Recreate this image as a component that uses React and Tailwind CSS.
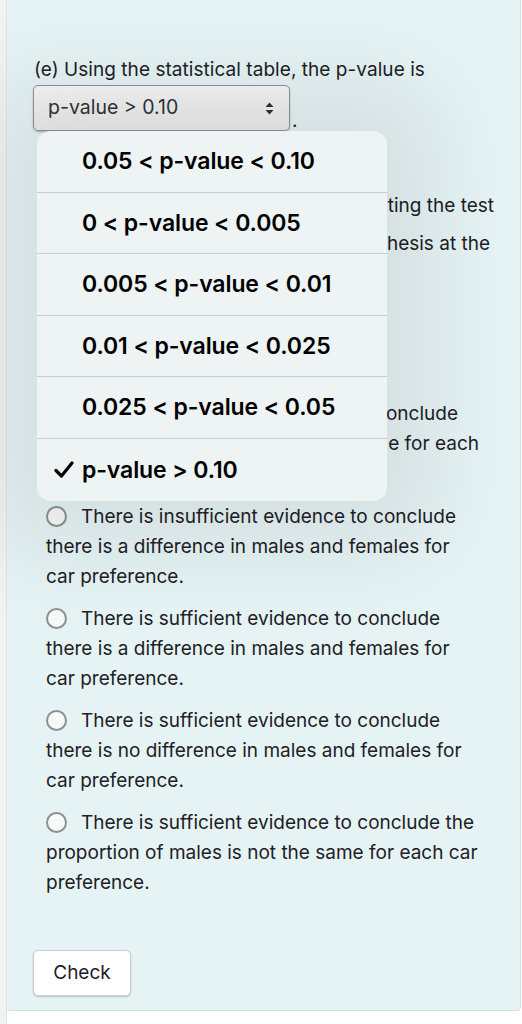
import { useState } from "react"

const choices = [
    "0.05 < p-value < 0.10",
    "0 < p-value < 0.005",
    "0.005 < p-value < 0.01",
    "0.01 < p-value < 0.025",
    "0.025 < p-value < 0.05",
    "p-value > 0.10",
]

const answers = [
    ["There is insufficient evidence to conclude", "there is a difference in males and females for", "car preference."],
    ["There is sufficient evidence to conclude", "there is a difference in males and females for", "car preference."],
    ["There is sufficient evidence to conclude", "there is no difference in males and females for", "car preference."],
    ["There is sufficient evidence to conclude the", "proportion of males is not the same for each car", "preference."],
]

function Radio() {
    return (
        <span className="inline-block w-[21px] h-[21px] rounded-full border-2 border-[#8d8f91] bg-[#f7f8f8] align-[-4px] mr-[14px]" />
    )
}

export default function App() {
    const [selected] = useState(5)

    return (
        <div className="min-h-[1024px] bg-white flex font-['Inter',sans-serif] text-[19px] text-[#1d2125]">
            <div className="w-[7px] bg-[#f1f2f2] border-r border-[#dfe3e4]" />
            <div className="relative w-[514px] h-[1011px] bg-[#e6f3f5] border-b border-r border-[#cfdfe2] rounded-b-[4px] pt-[55px] pl-[27px] pr-[21px]">
                {/* (e) */}
                <div className="h-[30px] leading-[30px] tracking-[0.05px]">(e) Using the statistical table, the p-value is</div>
                <div className="flex items-end">
                    <div className="w-[257px] h-[46px] -ml-[1px] rounded-[5px] border border-[#8e9398] bg-gradient-to-b from-[#f6f6f6] to-[#ebebeb] shadow-[0_1px_2px_rgba(0,0,0,0.25)] flex items-center justify-between pl-[14px] pr-[15px] text-[19.5px] text-[#2f3337]">
                        <span>{choices[selected]}</span>
                        <svg width="9" height="13" viewBox="0 0 9 13">
                            <path d="M4.5 0.5 L8.5 5 H0.5 Z" fill="#2f3337" />
                            <path d="M4.5 12.5 L8.5 8 H0.5 Z" fill="#2f3337" />
                        </svg>
                    </div>
                    <span className="ml-[2px] leading-[20px]">.</span>
                </div>

                {/* (f) – mostly covered by the picker, only the line ends show */}
                <div className="mt-[56px] leading-[38px]">
                    <div className="flex justify-end"><span className="mr-[5px]">ting the test</span></div>
                    <div className="flex justify-end"><span className="mr-[9px]">hesis at the</span></div>
                    <div className="h-[38px]" />
                </div>

                {/* (g) */}
                <div className="mt-[53px] h-[30px]" />
                <div className="mt-[15px] leading-[30px]">
                    <div className="flex justify-end"><span className="mr-[41px]">onclude</span></div>
                    <div className="flex justify-end"><span className="mr-[20px]">e for each</span></div>
                </div>

                {/* options */}
                <div className="mt-[43px] ml-[12px] flex flex-col gap-[12px] leading-[30px]">
                    {answers.map((a, i) => (
                        <div key={i}>
                            <div><Radio />{a[0]}</div>
                            <div>{a[1]}</div>
                            <div>{a[2]}</div>
                        </div>
                    ))}
                </div>

                <button className="mt-[52px] -ml-[1px] w-[98px] h-[46px] bg-white rounded-[5px] border border-[#c9cccf] shadow-[0_1px_2px_rgba(0,0,0,0.2)] text-[19px] text-[#1d2125]">
                    Check
                </button>

                {/* native picker popup */}
                <div className="absolute left-[30px] top-[131px] w-[350px] rounded-[14px] bg-[#eef3f4] shadow-[0_0_90px_50px_rgba(0,0,0,0.08)] overflow-hidden">
                    {choices.map((c, i) => (
                        <div
                            key={c}
                            className={
                                "h-[61.6px] flex items-center text-[23px] font-semibold text-black tracking-[-0.1px] " +
                                (i < choices.length - 1 ? "border-b border-[#c9cdce]" : "")
                            }
                        >
                            <span className="w-[45px] flex justify-end pr-[8px]">
                                {i === selected && (
                                    <svg width="20" height="17" viewBox="0 0 20 17">
                                        <path d="M2 9.5 L7.5 15 L18 2" fill="none" stroke="#000" strokeWidth="3.2" strokeLinecap="round" strokeLinejoin="round" />
                                    </svg>
                                )}
                            </span>
                            <span>{c}</span>
                        </div>
                    ))}
                </div>
            </div>
        </div>
    )
}
